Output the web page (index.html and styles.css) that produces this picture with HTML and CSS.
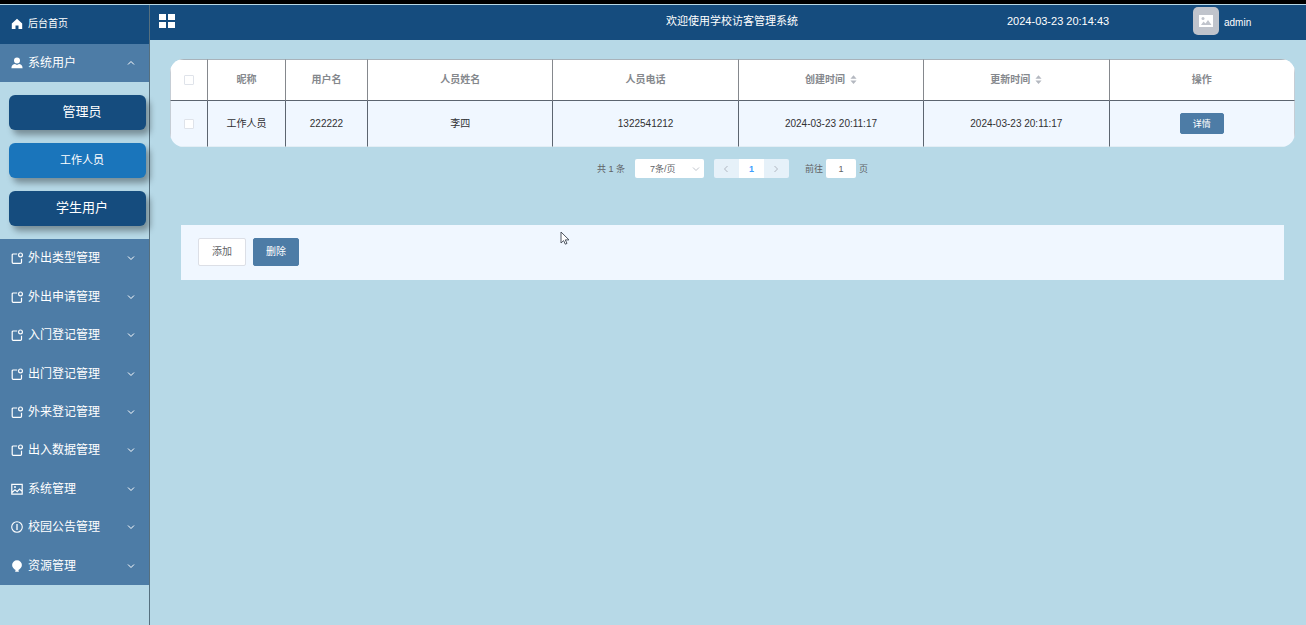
FILE: index.html
```html
<!DOCTYPE html>
<html lang="zh-CN">
<head>
    <meta charset="UTF-8">
    <meta name="viewport" content="width=device-width, initial-scale=1.0">
    <title>学校访客管理系统</title>
    <link rel="stylesheet" href="styles.css">
</head>
<body>

    <!-- Shared icons -->
    <svg class="sprite" aria-hidden="true">
        <symbol id="down" viewBox="0 0 8 8"><path d="M1 2.5l3 3 3-3" fill="none" stroke="currentColor"/></symbol>
        <symbol id="form" viewBox="0 0 12 12"><path d="M6.200 2H2.200Q1.200 2 1.200 3v7.300q0 1 1 1h7.300q1 0 1-1V6.800" fill="none" stroke="currentColor" stroke-width="1.200"/><circle cx="9.500" cy="2.900" r="1.900" fill="none" stroke="currentColor" stroke-width="1.200"/></symbol>
        <symbol id="sort" viewBox="0 0 8 10"><path d="M4 0l3.500 4h-7zM4 10L.5 6h7z" fill="currentColor"/></symbol>
    </svg>

    <div class="layout">
        <aside class="sidebar">
            <nav>
                <div class="menu menu-top">
                    <a class="menu-item home" href="#">
                        <svg class="icon" viewBox="0 0 12 12"><path d="M6 .8L.8 5.500V11h3.700V7.500h3V11h3.700V5.500z" fill="currentColor"/></svg>
                        <span>后台首页</span>
                    </a>
                    <button class="menu-item" type="button" aria-expanded="true">
                        <svg class="icon" viewBox="0 0 12 12"><circle cx="6" cy="3.500" r="3" fill="currentColor"/><path d="M.4 11.200c0-3 2-4 3.600-4.200L6 8l2-1c1.600.2 3.600 1.200 3.600 4.200z" fill="currentColor"/></svg>
                        <span>系统用户</span>
                        <svg class="arrow open"><use href="#down"/></svg>
                    </button>
                </div>

                <div class="submenu">
                    <a href="#">管理员</a>
                    <a class="active" href="#">工作人员</a>
                    <a href="#">学生用户</a>
                </div>

                <div class="menu menu-main">
                    <button class="menu-item" type="button"><svg class="icon"><use href="#form"/></svg><span>外出类型管理</span><svg class="arrow"><use href="#down"/></svg></button>
                    <button class="menu-item" type="button"><svg class="icon"><use href="#form"/></svg><span>外出申请管理</span><svg class="arrow"><use href="#down"/></svg></button>
                    <button class="menu-item" type="button"><svg class="icon"><use href="#form"/></svg><span>入门登记管理</span><svg class="arrow"><use href="#down"/></svg></button>
                    <button class="menu-item" type="button"><svg class="icon"><use href="#form"/></svg><span>出门登记管理</span><svg class="arrow"><use href="#down"/></svg></button>
                    <button class="menu-item" type="button"><svg class="icon"><use href="#form"/></svg><span>外来登记管理</span><svg class="arrow"><use href="#down"/></svg></button>
                    <button class="menu-item" type="button"><svg class="icon"><use href="#form"/></svg><span>出入数据管理</span><svg class="arrow"><use href="#down"/></svg></button>
                    <button class="menu-item" type="button">
                        <svg class="icon" viewBox="0 0 12 12"><path d="M.8 1.300h10.400v9.900H.8zM1 9.500l3-2.700 2.200 1.900L8.500 6 11 8.200" fill="none" stroke="currentColor" stroke-width="1.200"/><circle cx="4" cy="4" r="1" fill="currentColor"/></svg>
                        <span>系统管理</span><svg class="arrow"><use href="#down"/></svg>
                    </button>
                    <button class="menu-item" type="button">
                        <svg class="icon" viewBox="0 0 12 12"><circle cx="6" cy="6" r="5.300" fill="none" stroke="currentColor" stroke-width="1.100"/><path d="M6 3v6" stroke="currentColor" stroke-width="1.300"/></svg>
                        <span>校园公告管理</span><svg class="arrow"><use href="#down"/></svg>
                    </button>
                    <button class="menu-item" type="button">
                        <svg class="icon" viewBox="0 0 12 12"><path d="M6 .2a4.900 4.900 0 0 1 4.900 4.900c0 2.300-2 4.200-3.500 5l.5 1.700H4.100l.5-1.700C3.100 9.300 1.100 7.400 1.100 5.100A4.900 4.900 0 0 1 6 .2z" fill="currentColor"/></svg>
                        <span>资源管理</span><svg class="arrow"><use href="#down"/></svg>
                    </button>
                </div>
            </nav>
        </aside>

        <div class="content">
            <header class="topbar">
                <button class="toggle" type="button" aria-label="菜单">
                    <svg width="16" height="16" viewBox="0 0 16 16"><path d="M0 1h7v6H0zM9 1h7v6H9zM0 9h7v6H0zM9 9h7v6H9z" fill="#fff"/></svg>
                </button>
                <span>欢迎使用学校访客管理系统</span>
                <span>2024-03-23 20:14:43</span>
                <div class="user">
                    <span class="avatar">
                        <svg width="14" height="14" viewBox="0 0 14 14"><path d="M0 1h14v12H0z" fill="#fff"/><circle cx="4" cy="4.500" r="1.500" fill="#c0c4cc"/><path d="M2 11l2.500-3.500L6.500 9.500 9 6l3.500 5z" fill="#c0c4cc"/></svg>
                    </span>
                    <span>admin</span>
                </div>
            </header>

            <main>
                <div class="table-box">
                    <table>
                        <colgroup>
                            <col class="col-check">
                            <col class="col-nick">
                            <col class="col-name">
                            <col span="5">
                        </colgroup>
                        <thead>
                            <tr>
                                <th><input type="checkbox" aria-label="全选"></th>
                                <th>昵称</th>
                                <th>用户名</th>
                                <th>人员姓名</th>
                                <th>人员电话</th>
                                <th>创建时间<svg class="sort"><use href="#sort"/></svg></th>
                                <th>更新时间<svg class="sort"><use href="#sort"/></svg></th>
                                <th>操作</th>
                            </tr>
                        </thead>
                        <tbody>
                            <tr>
                                <td><input type="checkbox" aria-label="选择"></td>
                                <td>工作人员</td>
                                <td>222222</td>
                                <td>李四</td>
                                <td>1322541212</td>
                                <td>2024-03-23 20:11:17</td>
                                <td>2024-03-23 20:11:17</td>
                                <td><button class="btn btn-primary btn-small" type="button">详情</button></td>
                            </tr>
                        </tbody>
                    </table>
                </div>

                <div class="pagination">
                    <span>共 1 条</span>
                    <div class="page-size">
                        <select aria-label="每页条数">
                            <option>7条/页</option>
                        </select>
                        <svg class="arrow"><use href="#down"/></svg>
                    </div>
                    <div class="pager">
                        <button type="button" aria-label="上一页" disabled><svg class="arrow prev"><use href="#down"/></svg></button>
                        <button class="current" type="button">1</button>
                        <button type="button" aria-label="下一页" disabled><svg class="arrow next"><use href="#down"/></svg></button>
                    </div>
                    <div class="jump">
                        <label for="page">前往</label>
                        <input id="page" type="text" value="1">
                        <span>页</span>
                    </div>
                </div>

                <div class="actions">
                    <button class="btn" type="button">添加</button>
                    <button class="btn btn-primary" type="button">删除</button>
                </div>
            </main>
        </div>
    </div>

    <!-- Mouse pointer -->
    <svg class="pointer" width="10" height="14" viewBox="0 0 10 14"><path d="M1 1v11l2.600-2.400 1.700 3.600 1.700-.8-1.700-3.500H9z" fill="#fff" stroke="#3c4450" stroke-width=".9"/></svg>

</body>
</html>
```

FILE: styles.css
```css
* {
    box-sizing: border-box;
}

body {
    margin: 0;
    border-top: 4px solid #000;
    background-color: #b7d9e7;
    color: #303133;
    font-family: "Liberation Sans", "Noto Sans CJK SC", sans-serif;
    font-size: 10px;
    line-height: 16px;
}

button, input, select {
    margin: 0;
    font: inherit;
    color: inherit;
}

a {
    color: inherit;
    text-decoration: none;
}

.sprite {
    display: none;
}

.layout {
    display: flex;
    min-height: calc(100vh - 4px);
    padding-top: 1px;
}

/* Sidebar */
.sidebar {
    flex: 0 0 150px;
    border-right: 1px solid #56707f;
}

.menu {
    display: grid;
    grid-auto-rows: 1fr;
    background-color: #4d7ca6;
    color: #fff;
    font-size: 12px;
}

.menu-top {
    height: 77px;
}

.menu-main {
    height: 346px;
}

.menu-item {
    display: flex;
    align-items: center;
    gap: 5px;
    padding: 0 14px 0 11px;
    border: none;
    background: none;
    text-align: left;
    cursor: pointer;
}

.home {
    background-color: #154c7e;
    font-size: 10px;
}

.icon {
    width: 12px;
    height: 12px;
}

.arrow {
    width: 8px;
    height: 8px;
}

.menu-item .arrow {
    margin-left: auto;
}

.open {
    transform: rotate(180deg);
}

.submenu {
    display: grid;
    gap: 13px;
    padding: 13px 3px 13px 9px;
}

.submenu a {
    height: 35px;
    padding-left: 9px;
    border-radius: 6px;
    background-color: #154c7e;
    box-shadow: 4px 5px 6px rgba(0, 0, 0, 0.35);
    color: #fff;
    font-size: 13px;
    line-height: 34px;
    text-align: center;
}

.submenu .active {
    background-color: #1a75bb;
    font-size: 11px;
}

/* Top bar */
.content {
    flex: 1;
    min-width: 0;
}

.topbar {
    display: grid;
    grid-template-columns: 516fr 341fr 186fr 113fr;
    align-items: center;
    height: 35px;
    padding-bottom: 3px;
    background-color: #154c7e;
    color: #fff;
    font-size: 11px;
}

.toggle {
    display: flex;
    width: 34px;
    padding: 0 9px;
    border: none;
    background: none;
}

.user {
    display: flex;
    align-items: flex-end;
    gap: 5px;
    font-size: 10px;
    line-height: 24px;
}

.avatar {
    display: flex;
    align-items: center;
    justify-content: center;
    width: 26px;
    height: 28px;
    border-radius: 5px;
    background-color: #c0c4cc;
}

main {
    padding: 19px 11px 0 20px;
}

/* Table */
.table-box {
    overflow: hidden;
    border-radius: 14px;
    background-color: #f0f7ff;
}

table {
    width: 100%;
    border-spacing: 0;
    table-layout: fixed;
    text-align: center;
}

.col-check {
    width: 38px;
}

.col-nick {
    width: 78px;
}

.col-name {
    width: 82px;
}

th, td {
    padding: 0;
    border-right: 1px solid #5c6570;
}

th {
    height: 42px;
    border-top: 1px solid #a9b3bb;
    border-right-color: #85888d;
    border-bottom: 1px solid #5c6570;
    background-color: #fff;
    color: #85888d;
}

td {
    height: 46px;
    border-bottom: 1px solid #e3eef5;
}

th:first-child, td:first-child {
    border-left: 1px solid #c5cdd5;
}

th:last-child, td:last-child {
    border-right-color: #c5cdd5;
}

input[type="checkbox"] {
    appearance: none;
    width: 10px;
    height: 10px;
    border: 1px solid #dfe3ea;
    border-radius: 1px;
    background-color: #fff;
    vertical-align: middle;
}

.sort {
    width: 7px;
    height: 9px;
    margin-left: 5px;
    color: #b4b8c0;
    vertical-align: -1px;
}

/* Buttons */
.btn {
    height: 28px;
    padding: 0 13px;
    border: 1px solid #dcdfe6;
    border-radius: 2px;
    background-color: #fff;
    color: #606266;
    cursor: pointer;
}

.btn-primary {
    padding: 0 12px;
    border-color: #4d7ca6;
    background-color: #4d7ca6;
    color: #fff;
}

.btn-small {
    height: 21px;
    font-size: 9px;
    line-height: 12px;
}

/* Pagination */
.pagination {
    display: flex;
    align-items: center;
    justify-content: center;
    gap: 10px;
    margin-top: 12px;
    color: #606266;
    font-size: 9px;
}

.page-size {
    position: relative;
}

.page-size select {
    display: block;
    appearance: none;
    width: 69px;
    height: 19px;
    padding: 0 15px;
    border: none;
    border-radius: 2px;
    background-color: #fff;
}

.page-size .arrow {
    position: absolute;
    top: 6px;
    right: 4px;
    color: #c0c4cc;
    pointer-events: none;
}

.pager {
    display: flex;
    overflow: hidden;
    border-radius: 2px;
}

.pager button {
    display: flex;
    align-items: center;
    justify-content: center;
    width: 25px;
    height: 19px;
    padding: 0;
    border: none;
    background-color: #e6f1f9;
    color: #b0b6c0;
}

.pager .current {
    background-color: #fff;
    color: #409eff;
    font-weight: bold;
}

.prev {
    transform: rotate(90deg);
}

.next {
    transform: rotate(-90deg);
}

.jump {
    display: flex;
    align-items: center;
    gap: 3px;
    margin-left: 6px;
}

.jump input {
    width: 30px;
    height: 19px;
    padding: 0;
    border: none;
    border-radius: 2px;
    background-color: #fff;
    text-align: center;
}

/* Action panel */
.actions {
    display: flex;
    gap: 7px;
    margin: 47px 11px 0;
    padding: 13px 17px 14px;
    background-color: #f0f7ff;
}

.pointer {
    position: absolute;
    top: 231px;
    left: 560px;
}
```
